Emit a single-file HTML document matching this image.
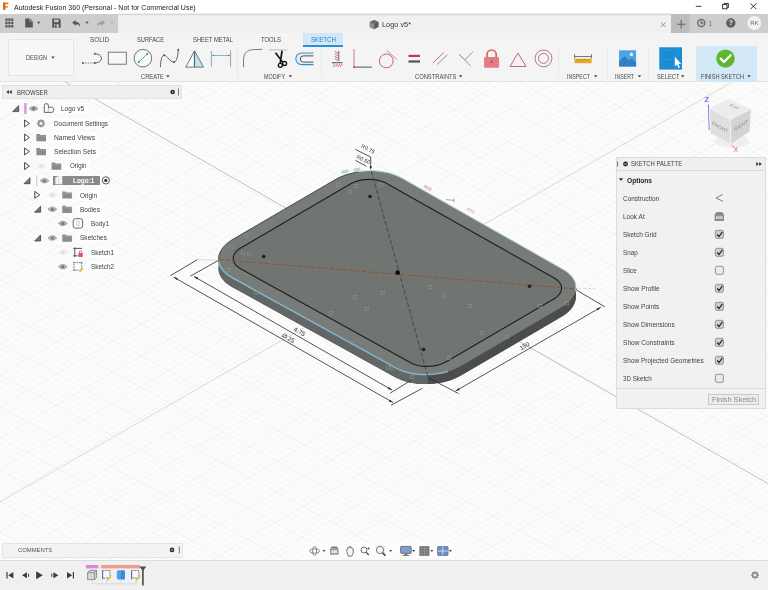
<!DOCTYPE html>
<html>
<head>
<meta charset="utf-8">
<style>
*{box-sizing:border-box;margin:0;padding:0}
html,body{width:768px;height:590px;overflow:hidden;background:#fbfbfb;font-family:"Liberation Sans",sans-serif;}
#root{position:relative;width:768px;height:590px;overflow:hidden;background:#fbfbfb;filter:blur(0.45px)}
.abs{position:absolute}
.t{position:absolute;white-space:nowrap;color:#555;font-size:6.5px;line-height:8px;letter-spacing:0}
#title{left:0;top:0;width:768px;height:14px;background:#fff}
#qbar{left:0;top:14px;width:768px;height:19px;background:#f0f0f0}
#qleft{left:0;top:14px;width:118px;height:19px;background:#cdcdcd}
#qright{left:671px;top:14px;width:97px;height:19px;background:#cdcdcd}
#ribbon{left:0;top:33px;width:768px;height:49px;background:#f4f4f4;border-bottom:1px solid #e2e2e2}
#bottom{left:0;top:560px;width:768px;height:30px;background:#f0f0f0;border-top:1px solid #dcdcdc}
</style>
</head>
<body>
<div id="root">
<!--CANVAS-->
<svg class="abs" id="canvas" style="left:0;top:0" width="768" height="590" viewBox="0 0 768 590">
<rect x="0" y="0" width="768" height="590" fill="#fcfcfc"/>
<path d="M2 80 L0 81M24 80 L0 94M35 80 L0 101M46 80 L0 107M58 80 L0 114M80 80 L0 127M91 80 L0 133M102 80 L0 140M113 80 L0 146M135 80 L0 159M146 80 L0 165M157 80 L0 172M168 80 L0 178M190 80 L0 191M201 80 L0 198M212 80 L0 204M223 80 L0 210M245 80 L0 223M256 80 L0 230M267 80 L-0 236M278 80 L0 242M300 80 L0 255M311 80 L0 262M322 80 L0 268M332 80 L0 274M354 80 L0 287M365 80 L0 293M376 80 L0 300M387 80 L-0 306M409 80 L0 319M419 80 L-0 325M430 80 L0 331M441 80 L0 338M463 80 L0 350M473 80 L0 356M484 80 L0 363M495 80 L0 369M516 80 L0 382M527 80 L0 388M538 80 L0 394M549 80 L0 400M570 80 L0 413M581 80 L0 419M592 80 L0 425M602 80 L0 432M624 80 L0 444M634 80 L0 450M645 80 L-0 457M656 80 L0 463M677 80 L-0 475M688 80 L-0 481M698 80 L0 488M709 80 L0 494M730 80 L0 506M741 80 L0 512M751 80 L0 519M762 80 L0 525M768 89 L0 537M768 95 L0 543M768 101 L0 549M768 107 L0 555M768 119 L10 562M768 126 L20 562M768 132 L31 562M768 138 L41 562M768 150 L62 562M768 156 L73 562M768 162 L83 562M768 168 L94 562M768 181 L115 562M768 187 L125 562M768 193 L135 562M768 199 L146 562M768 211 L167 562M768 217 L177 562M768 223 L187 562M768 229 L198 562M768 241 L218 562M768 247 L229 562M768 253 L239 562M768 259 L249 562M768 272 L270 562M768 278 L280 562M768 284 L291 562M768 290 L301 562M768 302 L322 562M768 308 L332 562M768 314 L342 562M768 320 L352 562M768 332 L373 562M768 338 L383 562M768 343 L393 562M768 349 L404 562M768 361 L424 562M768 367 L434 562M768 373 L444 562M768 379 L455 562M768 391 L475 562M768 397 L485 562M768 403 L495 562M768 409 L505 562M768 421 L526 562M768 427 L536 562M768 433 L546 562M768 438 L556 562M768 450 L576 562M768 456 L586 562M768 462 L596 562M768 468 L607 562M768 480 L627 562M768 485 L637 562M768 491 L647 562M768 497 L657 562M768 509 L677 562M768 515 L687 562M768 521 L697 562M768 526 L707 562M768 538 L727 562M768 544 L737 562M768 550 L747 562M768 555 L757 562M765 80 L768 82M754 80 L768 88M732 80 L768 101M720 80 L768 108M709 80 L768 114M698 80 L768 121M675 80 L768 134M664 80 L768 141M653 80 L768 147M641 80 L768 154M619 80 L768 167M607 80 L768 173M596 80 L768 180M585 80 L768 186M562 80 L768 199M551 80 L768 206M539 80 L768 212M528 80 L768 219M505 80 L768 232M494 80 L768 238M482 80 L768 245M471 80 L768 251M448 80 L768 264M436 80 L768 271M425 80 L768 277M413 80 L768 283M390 80 L768 296M379 80 L768 303M367 80 L768 309M356 80 L768 316M333 80 L768 328M321 80 L768 335M309 80 L768 341M298 80 L768 347M275 80 L768 360M263 80 L768 367M251 80 L768 373M240 80 L768 379M217 80 L768 392M205 80 L768 398M193 80 L768 405M182 80 L768 411M158 80 L768 424M146 80 L768 430M135 80 L768 436M123 80 L768 443M100 80 L768 455M88 80 L768 461M76 80 L768 468M64 80 L768 474M41 80 L768 487M29 80 L768 493M17 80 L768 499M5 80 L768 505M0 90 L768 518M0 97 L768 524M0 103 L768 530M0 110 L768 537M0 123 L768 549M0 130 L768 555M0 136 L768 561M0 143 L758 562M0 156 L735 562M0 162 L724 562M0 169 L713 562M0 175 L702 562M0 188 L679 562M0 195 L668 562M0 201 L657 562M0 208 L645 562M0 221 L623 562M0 227 L611 562M0 234 L600 562M0 240 L589 562M0 253 L566 562M0 260 L555 562M0 266 L543 562M0 272 L532 562M0 285 L509 562M0 292 L498 562M0 298 L486 562M0 305 L475 562M0 317 L452 562M0 324 L440 562M0 330 L429 562M0 337 L417 562M0 349 L394 562M0 356 L383 562M0 362 L371 562M0 368 L360 562M0 381 L337 562M-0 388 L325 562M0 394 L314 562M0 400 L302 562M0 413 L279 562M0 419 L267 562M0 426 L256 562M0 432 L244 562M0 444 L221 562M0 451 L209 562M-0 457 L197 562M0 463 L186 562M0 476 L162 562M-0 482 L151 562M0 488 L139 562M0 495 L127 562M0 507 L104 562M0 513 L92 562M0 520 L80 562M-0 526 L68 562M-0 538 L45 562M0 545 L33 562M0 551 L21 562M0 557 L9 562" stroke="#f5f5f5" stroke-width="0.5" fill="none"/>
<path d="M13 80 L0 88M69 80 L0 120M124 80 L-0 152M179 80 L0 185M234 80 L0 217M289 80 L0 249M343 80 L0 281M398 80 L0 312M452 80 L0 344M506 80 L0 375M559 80 L0 407M613 80 L-0 438M666 80 L0 469M719 80 L0 500M768 83 L0 531M768 113 L0 562M768 144 L52 562M768 175 L104 562M768 205 L156 562M768 235 L208 562M768 266 L260 562M768 296 L311 562M768 326 L363 562M768 355 L414 562M768 385 L465 562M768 415 L516 562M768 444 L566 562M768 474 L617 562M768 503 L667 562M768 532 L717 562M768 561 L767 562M743 80 L768 95M687 80 L768 128M630 80 L768 160M573 80 L768 193M516 80 L768 225M459 80 L768 258M402 80 L768 290M344 80 L768 322M286 80 L768 354M228 80 L768 386M170 80 L768 417M111 80 L768 449M52 80 L768 480M0 84 L768 512M0 117 L768 543M0 149 L747 562M0 182 L690 562M0 214 L634 562M0 247 L577 562M0 279 L520 562M0 311 L463 562M0 343 L406 562M0 375 L348 562M-0 407 L290 562M0 438 L232 562M0 470 L174 562M-0 501 L115 562M-0 532 L57 562" stroke="#eeeeee" stroke-width="0.7" fill="none"/>
<path d="M56 76.7 L768 483.6" stroke="#cfb2ad" stroke-width="0.9" fill="none"/>
<path d="M0 502 L768 61.5" stroke="#c2e3bd" stroke-width="0.9" fill="none"/>
<path d="M563.2 279.2 L566.5 281.3 L569.4 283.7 L571.8 286.2 L573.7 288.9 L575.0 291.8 L575.7 294.7 L575.9 297.7 L575.4 300.6 L574.4 303.6 L572.9 306.5 L570.8 309.3 L568.1 312.0 L565.0 314.5 L561.5 316.8 L460.9 375.4 L457.0 377.5 L452.6 379.4 L448.0 380.9 L443.2 382.2 L438.2 383.1 L433.0 383.8 L427.8 384.1 L422.6 384.0 L417.5 383.7 L412.5 383.0 L407.7 382.0 L403.2 380.7 L399.0 379.1 L395.2 377.2 L232.0 287.0 L228.5 284.8 L225.5 282.4 L223.0 279.8 L221.0 277.1 L219.6 274.2 L218.8 271.3 L218.6 268.2 L218.9 265.2 L219.9 262.2 L221.4 259.3 L223.5 256.4 L226.2 253.7 L229.3 251.2 L232.9 248.8 L335.1 189.2 L339.1 187.1 L343.5 185.2 L348.1 183.7 L353.1 182.4 L358.2 181.4 L363.4 180.8 L368.7 180.6 L374.0 180.6 L379.2 181.0 L384.3 181.8 L389.1 182.8 L393.7 184.2 L397.9 185.9 L401.8 187.8 Z" fill="#4c4f4d"/>
<path d="M427.8 374.6 L422.6 374.5 L417.5 374.2 L412.5 373.5 L407.7 372.5 L403.2 371.2 L399.0 369.6 L395.2 367.7 L232.0 277.5 L228.5 275.3 L225.5 272.9 L223.0 270.3 L221.0 267.6 L219.6 264.7 L218.8 261.8 L218.6 258.7 L218.6 268.2 L218.8 271.3 L219.6 274.2 L221.0 277.1 L223.0 279.8 L225.5 282.4 L228.5 284.8 L232.0 287.0 L395.2 377.2 L399.0 379.1 L403.2 380.7 L407.7 382.0 L412.5 383.0 L417.5 383.7 L422.6 384.0 L427.8 384.1 Z" fill="#626664"/>
<path d="M575.9 288.2 L575.4 291.1 L574.4 294.1 L572.9 297.0 L570.8 299.8 L568.1 302.5 L565.0 305.0 L561.5 307.3 L460.9 365.9 L457.0 368.0 L452.6 369.9 L448.0 371.4 L443.2 372.7 L438.2 373.6 L433.0 374.3 L427.8 374.6 L427.8 384.1 L433.0 383.8 L438.2 383.1 L443.2 382.2 L448.0 380.9 L452.6 379.4 L457.0 377.5 L460.9 375.4 L561.5 316.8 L565.0 314.5 L568.1 312.0 L570.8 309.3 L572.9 306.5 L574.4 303.6 L575.4 300.6 L575.9 297.7 Z" fill="#4a4d4b"/>
<path d="M563.2 269.7 L566.5 271.8 L569.4 274.2 L571.8 276.7 L573.7 279.4 L575.0 282.3 L575.7 285.2 L575.9 288.2 L575.4 291.1 L574.4 294.1 L572.9 297.0 L570.8 299.8 L568.1 302.5 L565.0 305.0 L561.5 307.3 L460.9 365.9 L457.0 368.0 L452.6 369.9 L448.0 371.4 L443.2 372.7 L438.2 373.6 L433.0 374.3 L427.8 374.6 L422.6 374.5 L417.5 374.2 L412.5 373.5 L407.7 372.5 L403.2 371.2 L399.0 369.6 L395.2 367.7 L232.0 277.5 L228.5 275.3 L225.5 272.9 L223.0 270.3 L221.0 267.6 L219.6 264.7 L218.8 261.8 L218.6 258.7 L218.9 255.7 L219.9 252.7 L221.4 249.8 L223.5 246.9 L226.2 244.2 L229.3 241.7 L232.9 239.3 L335.1 179.7 L339.1 177.6 L343.5 175.7 L348.1 174.2 L353.1 172.9 L358.2 171.9 L363.4 171.3 L368.7 171.1 L374.0 171.1 L379.2 171.5 L384.3 172.3 L389.1 173.3 L393.7 174.7 L397.9 176.4 L401.8 178.3 Z" fill="#787c79"/>
<path d="M448.0 371.4 L443.2 372.7 L438.2 373.6 L433.0 374.3 L427.8 374.6 L422.6 374.5 L417.5 374.2 L412.5 373.5 L407.7 372.5 L403.2 371.2 L399.0 369.6 L395.2 367.7 L232.0 277.5 L228.5 275.3 L225.5 272.9 L223.0 270.3 L221.0 267.6 L219.6 264.7 L218.8 261.8 L218.6 258.7 " fill="none" stroke="#86b3ca" stroke-width="1.5"/>
<path d="M358.2 171.5 L363.4 170.9 L368.7 170.7 L374.0 170.7 L379.2 171.1 L384.3 171.9 L389.1 172.9 L393.7 174.3 L397.9 176.0 L401.8 177.9 L563.2 269.3 L566.5 271.4 L569.4 273.8 L571.8 276.3 L573.7 279.0 L575.0 281.9 L575.7 284.8 L575.9 287.8 L575.4 290.7 " fill="none" stroke="#a8cfd0" stroke-width="1" opacity="0.85"/>
<path d="M554.6 278.3 L556.4 279.5 L558.0 280.8 L559.4 282.2 L560.4 283.7 L561.1 285.3 L561.5 286.9 L561.6 288.5 L561.4 290.1 L560.8 291.8 L559.9 293.4 L558.8 294.9 L557.3 296.4 L555.6 297.8 L553.7 299.0 L446.3 361.7 L444.2 362.8 L441.8 363.8 L439.2 364.7 L436.6 365.4 L433.8 365.9 L431.0 366.2 L428.1 366.4 L425.2 366.4 L422.4 366.2 L419.7 365.8 L417.1 365.3 L414.6 364.5 L412.3 363.7 L410.2 362.6 L240.6 268.7 L238.7 267.5 L237.0 266.2 L235.6 264.8 L234.5 263.3 L233.8 261.7 L233.3 260.1 L233.2 258.4 L233.4 256.7 L233.9 255.1 L234.8 253.5 L235.9 251.9 L237.4 250.4 L239.1 249.0 L241.1 247.7 L349.9 184.2 L352.2 183.0 L354.6 182.0 L357.1 181.1 L359.8 180.4 L362.7 179.9 L365.5 179.6 L368.5 179.4 L371.4 179.5 L374.2 179.7 L377.0 180.1 L379.7 180.7 L382.2 181.4 L384.5 182.3 L386.7 183.4 Z" fill="#717572" stroke="#1c1c1c" stroke-width="1.1"/>
<path d="M218.8 261.8 L218.6 258.7 L218.9 255.7 L219.9 252.7 L221.4 249.8 L223.5 246.9 L226.2 244.2 L229.3 241.7 L232.9 239.3 L335.1 179.7 L339.1 177.6 L343.5 175.7 L348.1 174.2 L353.1 172.9 L358.2 171.9 " fill="none" stroke="#2e302f" stroke-width="0.8"/>
<path d="M219.5 259.6 L577.0 289.0" stroke="#8f4f2c" stroke-width="0.9" stroke-dasharray="4.5 2" fill="none"/>
<path d="M371.3 171.0 L427.6 376.0" stroke="#3a3a38" stroke-width="0.8" stroke-dasharray="4.5 2" fill="none"/>
<circle cx="370.0" cy="196.5" r="1.8" fill="#1e1e1e"/>
<circle cx="529.6" cy="286.2" r="1.8" fill="#1e1e1e"/>
<circle cx="423.6" cy="349.5" r="1.8" fill="#1e1e1e"/>
<circle cx="263.7" cy="256.6" r="1.8" fill="#1e1e1e"/>
<circle cx="397.6" cy="272.6" r="2.3" fill="#0c0c0c"/>
<path d="M219.0 260.0 L190.4 276.2" stroke="#2a2a2a" stroke-width="0.8" fill="none" />
<path d="M197.4 259.6 L170.5 275.6" stroke="#2a2a2a" stroke-width="0.8" fill="none" />
<path d="M194.0 276.5 L392.0 390.0" stroke="#2a2a2a" stroke-width="0.8" fill="none" />
<path d="M173.7 277.1 L393.0 402.5" stroke="#2a2a2a" stroke-width="0.8" fill="none" />
<path d="M194.0 276.5 L197.1 279.5 L198.2 277.6 z" fill="#2a2a2a"/>
<path d="M392.0 390.0 L388.9 387.0 L387.8 388.9 z" fill="#2a2a2a"/>
<path d="M173.7 277.1 L176.8 280.1 L177.9 278.2 z" fill="#2a2a2a"/>
<path d="M393.0 402.5 L389.9 399.5 L388.8 401.4 z" fill="#2a2a2a"/>
<path d="M411.0 380.4 L390.0 393.2" stroke="#2a2a2a" stroke-width="0.8" fill="none" />
<path d="M422.5 388.2 L391.0 405.2" stroke="#2a2a2a" stroke-width="0.8" fill="none" />
<text transform="translate(298.5 333.4) rotate(29.8)" font-family="Liberation Sans, sans-serif" font-size="6.2" fill="#333" text-anchor="middle">4.75</text>
<text transform="translate(287.2 339.8) rotate(29.8)" font-family="Liberation Sans, sans-serif" font-size="6.2" fill="#333" text-anchor="middle">Ø.25</text>
<path d="M197.0 259.6 L219.0 260.2" stroke="#e6c6bc" stroke-width="0.7" fill="none" />
<path d="M578.0 288.2 L595.0 288.6" stroke="#d9c2a8" stroke-width="0.7" fill="none" stroke-dasharray="3 2"/>
<path d="M428.0 377.5 L458.6 393.6" stroke="#2a2a2a" stroke-width="0.8" fill="none" />
<path d="M576.0 289.8 L604.8 306.8" stroke="#2a2a2a" stroke-width="0.8" fill="none" />
<path d="M455.6 391.0 L600.8 307.3" stroke="#2a2a2a" stroke-width="0.8" fill="none" />
<path d="M455.6 391.0 L459.8 389.9 L458.7 387.9 z" fill="#2a2a2a"/>
<path d="M600.8 307.3 L596.6 308.4 L597.7 310.4 z" fill="#2a2a2a"/>
<text transform="translate(525.6 347.8) rotate(-30.0)" font-family="Liberation Sans, sans-serif" font-size="6.2" fill="#333" text-anchor="middle">150</text>
<path d="M355.4 149.4 L370.7 157.0" stroke="#2a2a2a" stroke-width="0.8" fill="none" />
<path d="M370.7 157.0 L370.7 169.5" stroke="#2a2a2a" stroke-width="0.8" fill="none" />
<path d="M355.4 160.4 L366.4 166.2" stroke="#2a2a2a" stroke-width="0.8" fill="none" />
<text transform="translate(367.2 150.6) rotate(27.0)" font-family="Liberation Sans, sans-serif" font-size="5.4" fill="#333" text-anchor="middle">R0.75</text>
<text transform="translate(362.4 161.2) rotate(27.0)" font-family="Liberation Sans, sans-serif" font-size="5.4" fill="#333" text-anchor="middle">R0.50</text>
<circle cx="370.7" cy="167" r="1.1" fill="#222"/>
<rect x="341.5" y="170.1" width="7" height="3" fill="#a9cccd" opacity="0.8" transform="rotate(-14 345.0 171.6)"/>
<rect x="353.5" y="168.1" width="7" height="3" fill="#a9cccd" opacity="0.8" transform="rotate(-14 357.0 169.6)"/>
<text transform="translate(427.0 189.5) rotate(30.0)" font-family="Liberation Sans, sans-serif" font-size="4.6" fill="#c9777a" text-anchor="middle">R55</text>
<text transform="translate(470.0 212.0) rotate(30.0)" font-family="Liberation Sans, sans-serif" font-size="4.6" fill="#c9989a" text-anchor="middle">R55</text>
<path d="M446.0 199.6 L454.0 200.4" stroke="#b88" stroke-width="0.8" fill="none" />
<path d="M454.0 198.6 L454.0 202.4" stroke="#b88" stroke-width="0.8" fill="none" />
<rect x="244.2" y="234.5" width="3.6" height="3" fill="none" stroke="#8d918e" stroke-width="0.6"/>
<rect x="247.2" y="252.0" width="3.6" height="3" fill="none" stroke="#8d918e" stroke-width="0.6"/>
<rect x="229.7" y="245.5" width="3.6" height="3" fill="none" stroke="#8d918e" stroke-width="0.6"/>
<rect x="241.2" y="251.5" width="3.6" height="3" fill="none" stroke="#8d918e" stroke-width="0.6"/>
<rect x="336.2" y="183.5" width="3.6" height="3" fill="none" stroke="#8d918e" stroke-width="0.6"/>
<rect x="348.2" y="190.5" width="3.6" height="3" fill="none" stroke="#8d918e" stroke-width="0.6"/>
<rect x="354.2" y="184.5" width="3.6" height="3" fill="none" stroke="#8d918e" stroke-width="0.6"/>
<rect x="379.2" y="183.5" width="3.6" height="3" fill="none" stroke="#8d918e" stroke-width="0.6"/>
<rect x="365.2" y="307.5" width="3.6" height="3" fill="none" stroke="#8d918e" stroke-width="0.6"/>
<rect x="353.2" y="295.5" width="3.6" height="3" fill="none" stroke="#8d918e" stroke-width="0.6"/>
<rect x="381.2" y="291.5" width="3.6" height="3" fill="none" stroke="#8d918e" stroke-width="0.6"/>
<rect x="442.2" y="294.0" width="3.6" height="3" fill="none" stroke="#8d918e" stroke-width="0.6"/>
<rect x="428.2" y="285.5" width="3.6" height="3" fill="none" stroke="#8d918e" stroke-width="0.6"/>
<rect x="468.2" y="304.5" width="3.6" height="3" fill="none" stroke="#8d918e" stroke-width="0.6"/>
<rect x="505.2" y="335.5" width="3.6" height="3" fill="none" stroke="#8d918e" stroke-width="0.6"/>
<rect x="480.2" y="331.5" width="3.6" height="3" fill="none" stroke="#8d918e" stroke-width="0.6"/>
<rect x="447.2" y="356.5" width="3.6" height="3" fill="none" stroke="#8d918e" stroke-width="0.6"/>
<rect x="538.2" y="304.5" width="3.6" height="3" fill="none" stroke="#8d918e" stroke-width="0.6"/>
<rect x="565.2" y="302.0" width="3.6" height="3" fill="none" stroke="#8d918e" stroke-width="0.6"/>
<rect x="386.2" y="366.0" width="3.6" height="3" fill="none" stroke="#8d918e" stroke-width="0.6"/>
<rect x="390.2" y="367.0" width="3.6" height="3" fill="none" stroke="#8d918e" stroke-width="0.6"/>
<rect x="410.2" y="375.5" width="3.6" height="3" fill="none" stroke="#8d918e" stroke-width="0.6"/>
<rect x="227.2" y="268.5" width="3.6" height="3" fill="none" stroke="#8d918e" stroke-width="0.6"/>
<rect x="254.2" y="291.5" width="3.6" height="3" fill="none" stroke="#8d918e" stroke-width="0.6"/>
<rect x="329.2" y="311.5" width="3.6" height="3" fill="none" stroke="#8d918e" stroke-width="0.6"/>
</svg>
<div class="abs" id="title"></div><div class="abs" id="qbar"></div><div class="abs" id="qleft"></div><div class="abs" id="qright"></div><div class="abs" id="ribbon"></div><div class="abs" id="bottom"></div>
<div class="abs" style="left:696px;top:46px;width:61px;height:36px;background:#d3e8f6"></div>
<div class="t" style="left:14.0px;top:2.8px;font-size:7.20px;line-height:9.2px;color:#222;transform-origin:0 50%;transform:scaleX(0.978);">Autodesk Fusion 360 (Personal - Not for Commercial Use)</div>
<div class="t" style="left:381.5px;top:20.4px;font-size:7.00px;line-height:9.0px;color:#333;transform-origin:0 50%;transform:scaleX(1.049);">Logo v5*</div>
<div class="abs" style="left:303px;top:33px;width:40px;height:14px;background:#d3e8f6;border-bottom:2px solid #2b8fd8"></div>
<div class="t" style="left:89.5px;top:36.1px;font-size:6.60px;line-height:8.6px;color:#444;transform-origin:0 50%;transform:scaleX(0.959);">SOLID</div>
<div class="t" style="left:137.0px;top:36.1px;font-size:6.60px;line-height:8.6px;color:#444;transform-origin:0 50%;transform:scaleX(0.866);">SURFACE</div>
<div class="t" style="left:193.0px;top:36.1px;font-size:6.60px;line-height:8.6px;color:#444;transform-origin:0 50%;transform:scaleX(0.884);">SHEET METAL</div>
<div class="t" style="left:261.0px;top:36.1px;font-size:6.60px;line-height:8.6px;color:#444;transform-origin:0 50%;transform:scaleX(0.899);">TOOLS</div>
<div class="t" style="left:310.5px;top:36.1px;font-size:6.60px;line-height:8.6px;color:#1f7fc9;transform-origin:0 50%;transform:scaleX(0.934);">SKETCH</div>
<div class="abs" style="left:8px;top:39px;width:66px;height:37px;background:#f8f8f8;border:1px solid #e6e6e6;border-radius:2px"></div>
<div class="t" style="left:26.0px;top:54.1px;font-size:6.60px;line-height:8.6px;color:#444;transform-origin:0 50%;transform:scaleX(0.830);">DESIGN</div>
<div class="t" style="left:141.0px;top:72.8px;font-size:6.40px;line-height:8.4px;color:#4a4a4a;transform-origin:0 50%;transform:scaleX(0.902);">CREATE</div>
<div class="t" style="left:264.0px;top:72.8px;font-size:6.40px;line-height:8.4px;color:#4a4a4a;transform-origin:0 50%;transform:scaleX(0.844);">MODIFY</div>
<div class="t" style="left:414.5px;top:72.8px;font-size:6.40px;line-height:8.4px;color:#4a4a4a;transform-origin:0 50%;transform:scaleX(0.905);">CONSTRAINTS</div>
<div class="t" style="left:567.0px;top:72.8px;font-size:6.40px;line-height:8.4px;color:#4a4a4a;transform-origin:0 50%;transform:scaleX(0.829);">INSPECT</div>
<div class="t" style="left:615.0px;top:72.8px;font-size:6.40px;line-height:8.4px;color:#4a4a4a;transform-origin:0 50%;transform:scaleX(0.814);">INSERT</div>
<div class="t" style="left:656.5px;top:72.8px;font-size:6.40px;line-height:8.4px;color:#4a4a4a;transform-origin:0 50%;transform:scaleX(0.904);">SELECT</div>
<div class="t" style="left:701.0px;top:72.8px;font-size:6.40px;line-height:8.4px;color:#4a4a4a;transform-origin:0 50%;transform:scaleX(0.883);">FINISH SKETCH</div>
<div class="abs" style="left:237px;top:48px;width:1px;height:31px;background:#e9e9e9"></div>
<div class="abs" style="left:321px;top:48px;width:1px;height:31px;background:#e9e9e9"></div>
<div class="abs" style="left:558px;top:48px;width:1px;height:31px;background:#e9e9e9"></div>
<div class="abs" style="left:607px;top:48px;width:1px;height:31px;background:#e9e9e9"></div>
<div class="abs" style="left:648px;top:48px;width:1px;height:31px;background:#e9e9e9"></div>
<div class="t" style="left:709.0px;top:20.1px;font-size:6.50px;line-height:8.5px;color:#444;transform-origin:0 50%;transform:scaleX(0.692);">1</div>
<div class="abs" style="left:2px;top:543px;width:181px;height:15px;background:#f3f3f3;border:1px solid #e4e4e4"></div>
<div class="t" style="left:17.5px;top:545.8px;font-size:6.20px;line-height:8.2px;color:#555;transform-origin:0 50%;transform:scaleX(0.946);">COMMENTS</div>
<div class="abs" style="left:2px;top:85px;width:180px;height:14px;background:#efefef;border:1px solid #e2e2e2"></div>
<div class="t" style="left:17.0px;top:88.7px;font-size:6.40px;line-height:8.4px;color:#444;transform-origin:0 50%;transform:scaleX(0.937);">BROWSER</div>
<div class="abs" style="left:57.0px;top:103.0px;width:31.0px;height:11px;background:rgba(255,255,255,0.6)"></div>
<div class="t" style="left:61.0px;top:105.0px;font-size:6.80px;line-height:8.8px;color:#414141;transform-origin:0 50%;transform:scaleX(0.951);">Logo v5</div>
<div class="abs" style="left:50.0px;top:117.9px;width:62.0px;height:11px;background:rgba(255,255,255,0.6)"></div>
<div class="t" style="left:54.0px;top:119.9px;font-size:6.80px;line-height:8.8px;color:#414141;transform-origin:0 50%;transform:scaleX(0.940);">Document Settings</div>
<div class="abs" style="left:50.0px;top:131.8px;width:49.0px;height:11px;background:rgba(255,255,255,0.6)"></div>
<div class="t" style="left:54.0px;top:133.8px;font-size:6.80px;line-height:8.8px;color:#414141;transform-origin:0 50%;transform:scaleX(0.980);">Named Views</div>
<div class="abs" style="left:50.0px;top:146.0px;width:50.0px;height:11px;background:rgba(255,255,255,0.6)"></div>
<div class="t" style="left:54.0px;top:148.0px;font-size:6.80px;line-height:8.8px;color:#414141;transform-origin:0 50%;transform:scaleX(0.966);">Selection Sets</div>
<div class="abs" style="left:65.5px;top:160.3px;width:24.5px;height:11px;background:rgba(255,255,255,0.6)"></div>
<div class="t" style="left:69.5px;top:162.3px;font-size:6.80px;line-height:8.8px;color:#414141;transform-origin:0 50%;transform:scaleX(0.910);">Origin</div>
<div class="abs" style="left:76.0px;top:189.5px;width:25.0px;height:11px;background:rgba(255,255,255,0.6)"></div>
<div class="t" style="left:80.0px;top:191.5px;font-size:6.80px;line-height:8.8px;color:#414141;transform-origin:0 50%;transform:scaleX(0.937);">Origin</div>
<div class="abs" style="left:76.0px;top:203.7px;width:28.0px;height:11px;background:rgba(255,255,255,0.6)"></div>
<div class="t" style="left:80.0px;top:205.7px;font-size:6.80px;line-height:8.8px;color:#414141;transform-origin:0 50%;transform:scaleX(0.962);">Bodies</div>
<div class="abs" style="left:87.0px;top:217.9px;width:26.0px;height:11px;background:rgba(255,255,255,0.6)"></div>
<div class="t" style="left:91.0px;top:219.9px;font-size:6.80px;line-height:8.8px;color:#414141;transform-origin:0 50%;transform:scaleX(0.934);">Body1</div>
<div class="abs" style="left:76.0px;top:232.2px;width:35.0px;height:11px;background:rgba(255,255,255,0.6)"></div>
<div class="t" style="left:80.0px;top:234.2px;font-size:6.80px;line-height:8.8px;color:#414141;transform-origin:0 50%;transform:scaleX(0.965);">Sketches</div>
<div class="abs" style="left:87.0px;top:246.7px;width:31.0px;height:11px;background:rgba(255,255,255,0.6)"></div>
<div class="t" style="left:91.0px;top:248.7px;font-size:6.80px;line-height:8.8px;color:#414141;transform-origin:0 50%;transform:scaleX(0.936);">Sketch1</div>
<div class="abs" style="left:87.0px;top:261.0px;width:31.0px;height:11px;background:rgba(255,255,255,0.6)"></div>
<div class="t" style="left:91.0px;top:263.0px;font-size:6.80px;line-height:8.8px;color:#414141;transform-origin:0 50%;transform:scaleX(0.936);">Sketch2</div>
<div class="abs" style="left:53px;top:175.6px;width:47px;height:9.2px;background:#8a8a8a"></div>
<div class="t" style="left:73.0px;top:176.7px;font-size:6.80px;line-height:8.8px;color:#fff;font-weight:bold;transform-origin:0 50%;transform:scaleX(0.944);">Logo:1</div>
<div class="abs" style="left:616px;top:156.5px;width:150px;height:252.5px;background:#f1f1f1;border:1px solid #dcdcdc"></div>
<div class="abs" style="left:617px;top:157.5px;width:148px;height:13px;background:#efefef;border-bottom:1px solid #dadada"></div>
<div class="t" style="left:630.5px;top:160.3px;font-size:6.30px;line-height:8.3px;color:#444;transform-origin:0 50%;transform:scaleX(0.934);">SKETCH PALETTE</div>
<div class="t" style="left:626.8px;top:176.0px;font-size:7.00px;line-height:9.0px;color:#222;font-weight:bold;transform-origin:0 50%;transform:scaleX(0.946);">Options</div>
<div class="t" style="left:623.3px;top:194.8px;font-size:6.80px;line-height:8.8px;color:#444;transform-origin:0 50%;transform:scaleX(0.948);">Construction</div>
<div class="t" style="left:623.3px;top:212.8px;font-size:6.80px;line-height:8.8px;color:#444;transform-origin:0 50%;transform:scaleX(0.957);">Look At</div>
<div class="t" style="left:623.3px;top:230.8px;font-size:6.80px;line-height:8.8px;color:#444;transform-origin:0 50%;transform:scaleX(0.949);">Sketch Grid</div>
<div class="t" style="left:623.3px;top:248.8px;font-size:6.80px;line-height:8.8px;color:#444;transform-origin:0 50%;transform:scaleX(0.926);">Snap</div>
<div class="t" style="left:623.3px;top:266.8px;font-size:6.80px;line-height:8.8px;color:#444;transform-origin:0 50%;transform:scaleX(0.930);">Slice</div>
<div class="t" style="left:623.3px;top:284.8px;font-size:6.80px;line-height:8.8px;color:#444;transform-origin:0 50%;transform:scaleX(0.961);">Show Profile</div>
<div class="t" style="left:623.3px;top:302.8px;font-size:6.80px;line-height:8.8px;color:#444;transform-origin:0 50%;transform:scaleX(0.958);">Show Points</div>
<div class="t" style="left:623.3px;top:320.8px;font-size:6.80px;line-height:8.8px;color:#444;transform-origin:0 50%;transform:scaleX(0.950);">Show Dimensions</div>
<div class="t" style="left:623.3px;top:338.8px;font-size:6.80px;line-height:8.8px;color:#444;transform-origin:0 50%;transform:scaleX(0.970);">Show Constraints</div>
<div class="t" style="left:623.3px;top:356.8px;font-size:6.80px;line-height:8.8px;color:#444;transform-origin:0 50%;transform:scaleX(0.953);">Show Projected Geometries</div>
<div class="t" style="left:623.3px;top:374.8px;font-size:6.80px;line-height:8.8px;color:#444;transform-origin:0 50%;transform:scaleX(0.915);">3D Sketch</div>
<div class="abs" style="left:616px;top:388px;width:149px;height:1px;background:#dcdcdc"></div>
<div class="abs" style="left:708px;top:394px;width:51px;height:11px;background:#ececec;border:1px solid #c9c9c9"></div>
<div class="t" style="left:711.5px;top:396.1px;font-size:6.80px;line-height:8.8px;color:#8a8a8a;transform-origin:0 50%;transform:scaleX(1.078);">Finish Sketch</div>
<svg class="abs" style="left:0;top:0" width="768" height="590" viewBox="0 0 768 590">
<path d="M6.3 92 l2.6 -2 v4z M9.2 92 l2.6 -2 v4z" fill="#333"/>
<circle cx="172.6" cy="92" r="2.3" fill="#2a2a2a"/><circle cx="172.6" cy="92" r="0.7" fill="#ddd"/>
<path d="M178.5 88.5 v7" stroke="#555" stroke-width="0.8"/>
<path d="M18.7 111.6 v-6 l-6 6z" fill="#777" stroke="#333" stroke-width="0.7" stroke-linejoin="round"/>
<rect x="24.2" y="103" width="2.4" height="11" fill="#d59ad6"/>
<path d="M29.2 108.6 q4.4 -4.6 8.8 0 q-4.4 4.6 -8.8 0z" fill="#b9b9b9" stroke="#8e8e8e" stroke-width="0.7"/>
<circle cx="33.6" cy="108.6" r="1.5" fill="#767676"/>
<path d="M44.3 112.4 V105.6 Q44.3 103.6 46.3 103.6 Q48.4 103.6 48.4 105.6 V107.8 Q50 106.6 52 107.2 Q54 108 53.8 110.4 Q53.6 112.4 51.4 112.4 Z" fill="#fbfbfb" stroke="#555" stroke-width="0.9" stroke-linejoin="round"/><path d="M48.4 107.8 V112" stroke="#999" stroke-width="0.6"/>
<path d="M24.6 119.9 l4.8 3.5 l-4.8 3.5z" fill="#fafafa" stroke="#333" stroke-width="0.9" stroke-linejoin="round"/>
<polygon points="45.40 123.40 44.05 124.66 44.11 126.51 42.26 126.45 41.00 127.80 39.74 126.45 37.89 126.51 37.95 124.66 36.60 123.40 37.95 122.14 37.89 120.29 39.74 120.35 41.00 119.00 42.26 120.35 44.11 120.29 44.05 122.14" fill="#939393"/>
<circle cx="41" cy="123.4" r="1.6" fill="#f0f0f0"/>
<path d="M24.6 134.0 l4.8 3.5 l-4.8 3.5z" fill="#fafafa" stroke="#333" stroke-width="0.9" stroke-linejoin="round"/>
<path d="M36.4 134.0 h3.2 l0.8 1 h5.6 v6.2 h-9.6z" fill="#8b8b8b"/>
<path d="M36.4 136.2 h9.6" stroke="#a5a5a5" stroke-width="0.7"/>
<path d="M24.6 148.0 l4.8 3.5 l-4.8 3.5z" fill="#fafafa" stroke="#333" stroke-width="0.9" stroke-linejoin="round"/>
<path d="M36.4 148.1 h3.2 l0.8 1 h5.6 v6.2 h-9.6z" fill="#8b8b8b"/>
<path d="M36.4 150.3 h9.6" stroke="#a5a5a5" stroke-width="0.7"/>
<path d="M24.6 162.5 l4.8 3.5 l-4.8 3.5z" fill="#fafafa" stroke="#333" stroke-width="0.9" stroke-linejoin="round"/>
<path d="M37.0 166.0 q4.4 -4.6 8.8 0 q-4.4 4.6 -8.8 0z" fill="#efefef" stroke="#e6e6e6" stroke-width="0.7"/>
<circle cx="41.4" cy="166.0" r="1.5" fill="#dedede"/>
<path d="M51.6 162.5 h3.2 l0.8 1 h5.6 v6.2 h-9.6z" fill="#8b8b8b"/>
<path d="M51.6 164.7 h9.6" stroke="#a5a5a5" stroke-width="0.7"/>
<path d="M30.0 183.7 v-6 l-6 6z" fill="#777" stroke="#333" stroke-width="0.7" stroke-linejoin="round"/>
<rect x="36.3" y="175.5" width="1" height="11" fill="#e8b5c9"/>
<path d="M40.1 180.7 q4.4 -4.6 8.8 0 q-4.4 4.6 -8.8 0z" fill="#b9b9b9" stroke="#8e8e8e" stroke-width="0.7"/>
<circle cx="44.5" cy="180.7" r="1.5" fill="#767676"/>
<path d="M55.3 184.2 v-6.6 l3.2 -1.6 h3.8 v8.2z" fill="#f2f2f2"/><path d="M58.5 184.2 v-8.2" stroke="#cfcfcf" stroke-width="0.6"/>
<circle cx="105.8" cy="180.4" r="3.6" fill="#fff" stroke="#444" stroke-width="0.9"/><circle cx="105.8" cy="180.4" r="1.6" fill="#333"/>
<path d="M34.8 191.4 l4.8 3.5 l-4.8 3.5z" fill="#fafafa" stroke="#333" stroke-width="0.9" stroke-linejoin="round"/>
<path d="M47.9 194.9 q4.4 -4.6 8.8 0 q-4.4 4.6 -8.8 0z" fill="#efefef" stroke="#e6e6e6" stroke-width="0.7"/>
<circle cx="52.3" cy="194.9" r="1.5" fill="#dedede"/>
<path d="M62.3 191.4 h3.2 l0.8 1 h5.6 v6.2 h-9.6z" fill="#8b8b8b"/>
<path d="M62.3 193.6 h9.6" stroke="#a5a5a5" stroke-width="0.7"/>
<path d="M40.6 212.2 v-6 l-6 6z" fill="#777" stroke="#333" stroke-width="0.7" stroke-linejoin="round"/>
<path d="M48.0 209.2 q4.4 -4.6 8.8 0 q-4.4 4.6 -8.8 0z" fill="#b9b9b9" stroke="#8e8e8e" stroke-width="0.7"/>
<circle cx="52.4" cy="209.2" r="1.5" fill="#767676"/>
<path d="M62.3 205.7 h3.2 l0.8 1 h5.6 v6.2 h-9.6z" fill="#8b8b8b"/>
<path d="M62.3 207.9 h9.6" stroke="#a5a5a5" stroke-width="0.7"/>
<path d="M58.4 223.4 q4.4 -4.6 8.8 0 q-4.4 4.6 -8.8 0z" fill="#b9b9b9" stroke="#8e8e8e" stroke-width="0.7"/>
<circle cx="62.8" cy="223.4" r="1.5" fill="#767676"/>
<rect x="73.2" y="218.7" width="9.4" height="9.4" rx="2.2" fill="#fdfdfd" stroke="#555" stroke-width="0.9"/>
<path d="M76.3 221.6 q1.7 -1 3.4 0 v3.6 q-1.7 1 -3.4 0z" fill="#eee" stroke="#bbb" stroke-width="0.5"/>
<path d="M40.6 241.0 v-6 l-6 6z" fill="#777" stroke="#333" stroke-width="0.7" stroke-linejoin="round"/>
<path d="M48.0 238.0 q4.4 -4.6 8.8 0 q-4.4 4.6 -8.8 0z" fill="#b9b9b9" stroke="#8e8e8e" stroke-width="0.7"/>
<circle cx="52.4" cy="238.0" r="1.5" fill="#767676"/>
<path d="M62.3 234.5 h3.2 l0.8 1 h5.6 v6.2 h-9.6z" fill="#8b8b8b"/>
<path d="M62.3 236.7 h9.6" stroke="#a5a5a5" stroke-width="0.7"/>
<path d="M58.4 252.4 q4.4 -4.6 8.8 0 q-4.4 4.6 -8.8 0z" fill="#efefef" stroke="#e6e6e6" stroke-width="0.7"/>
<circle cx="62.8" cy="252.4" r="1.5" fill="#dedede"/>
<path d="M73.4 248.4 h8.6 M74.8 247.4 v9.6 M73.4 255.8 h4" stroke="#444" stroke-width="0.9" fill="none"/>
<rect x="78.2" y="253" width="4.6" height="4" rx="0.8" fill="#e0566b"/><path d="M79.3 253 v-1 a1.2 1.2 0 0 1 2.4 0 v1" fill="none" stroke="#e0566b" stroke-width="0.8"/>
<path d="M58.4 266.7 q4.4 -4.6 8.8 0 q-4.4 4.6 -8.8 0z" fill="#b9b9b9" stroke="#8e8e8e" stroke-width="0.7"/>
<circle cx="62.8" cy="266.7" r="1.5" fill="#767676"/>
<rect x="74" y="262.6" width="7.6" height="7.6" fill="#fdfdfd" stroke="#555" stroke-width="0.8" stroke-dasharray="1.6 0.9"/>
<circle cx="74" cy="262.6" r="0.9" fill="#5b9bd5"/><circle cx="81.6" cy="262.6" r="0.9" fill="#5b9bd5"/><circle cx="74" cy="270.2" r="0.9" fill="#5b9bd5"/>
<path d="M79.5 271 l3 -3.4 l1 0.9 l-3 3.4 l-1.4 0.4z" fill="#e8c23a"/>
<path d="M3 2.6 h5.4 v1.9 h-3.2 v1.4 h2.6 v1.8 h-2.6 v2.3 h-2.2z" fill="#ee8a2a"/><path d="M3 2.6 h2.2 v7.4 h-2.2z" fill="#d96a16"/>
<path d="M695.8 6.3 h5.6" stroke="#222" stroke-width="0.9"/>
<rect x="722.6" y="4.6" width="4.4" height="4.2" fill="none" stroke="#222" stroke-width="0.9"/><path d="M724 4.6 v-1.2 h4.4 v4.2 h-1.4" fill="none" stroke="#222" stroke-width="0.9"/>
<path d="M750.5 3.4 l5.8 5.8 M756.3 3.4 l-5.8 5.8" stroke="#222" stroke-width="0.9"/>
<rect x="5.4" y="18.4" width="2.2" height="2.5" fill="#575757"/>
<rect x="5.4" y="21.7" width="2.2" height="2.5" fill="#575757"/>
<rect x="5.4" y="25.0" width="2.2" height="2.5" fill="#575757"/>
<rect x="8.3" y="18.4" width="2.2" height="2.5" fill="#575757"/>
<rect x="8.3" y="21.7" width="2.2" height="2.5" fill="#575757"/>
<rect x="8.3" y="25.0" width="2.2" height="2.5" fill="#575757"/>
<rect x="11.2" y="18.4" width="2.2" height="2.5" fill="#575757"/>
<rect x="11.2" y="21.7" width="2.2" height="2.5" fill="#575757"/>
<rect x="11.2" y="25.0" width="2.2" height="2.5" fill="#575757"/>
<path d="M25.2 18.4 h4.6 l3 3 v6.2 h-7.6z" fill="#575757"/><path d="M29.8 18.4 v3 h3" fill="none" stroke="#c9c9c9" stroke-width="0.6"/>
<path d="M37.0 21.7 h3.4 l-1.7 2.2z" fill="#575757"/>
<path d="M52.2 18.6 h7.2 l1.3 1.3 v7.8 h-8.5z" fill="#575757"/><rect x="54" y="19.6" width="4.6" height="2.5" fill="#c9c9c9"/><rect x="54.2" y="24.4" width="4.6" height="3.2" fill="#c9c9c9"/><rect x="55" y="25" width="1.6" height="2.6" fill="#575757"/>
<path d="M72.2 22.6 l3.6 -2.6 v1.7 q4.2 0.2 4.4 5 q-1.4 -2.6 -4.4 -2.4 v1.7z" fill="#575757"/>
<path d="M85.3 21.7 h3.4 l-1.7 2.2z" fill="#575757"/>
<path d="M105 22.6 l-3.6 -2.6 v1.7 q-4.2 0.2 -4.4 5 q1.4 -2.6 4.4 -2.4 v1.7z" fill="#9c9c9c"/>
<path d="M110.3 21.7 h3.4 l-1.7 2.2z" fill="#a8a8a8"/>
<rect x="118" y="13.6" width="553" height="1.6" fill="#d6d6d6"/>
<path d="M369.8 22 l4.4 -2 l4.4 2 v5 l-4.4 2.2 l-4.4 -2.2z" fill="#5c5c5c"/><path d="M369.8 22 l4.4 2 v5.2 l-4.4 -2.2z" fill="#8e8e8e"/><path d="M369.8 22 l4.4 -2 l4.4 2 l-4.4 2z" fill="#6e6e6e"/>
<path d="M661 22.4 l4.6 4.6 M665.6 22.4 l-4.6 4.6" stroke="#8a8a8a" stroke-width="0.9"/>
<rect x="671" y="14" width="18.5" height="19" fill="#bcbcbc"/>
<path d="M677 24.2 h8.4 M681.2 20 v8.4" stroke="#666" stroke-width="1.1"/>
<circle cx="701.3" cy="23" r="4.3" fill="#6a6a6a"/><circle cx="701.3" cy="23" r="3" fill="#bdbdbd"/><path d="M701.3 20.8 v2.4 h2" stroke="#444" stroke-width="0.9" fill="none"/>
<circle cx="730.8" cy="23" r="4.7" fill="#5e5e5e"/>
<text x="730.8" y="25.4" font-family="Liberation Sans, sans-serif" font-weight="bold" font-size="7" fill="#e8e8e8" text-anchor="middle">?</text>
<circle cx="754.3" cy="23" r="7" fill="#f2f2f2"/>
<text x="754.3" y="25.2" font-family="Liberation Sans, sans-serif" font-size="6" fill="#666" text-anchor="middle">RK</text>
<path d="M51.3 56.5 h3.4 l-1.7 2.2z" fill="#444"/>
<path d="M166.2 75.2 h3.4 l-1.7 2.2z" fill="#444"/>
<path d="M288.7 75.2 h3.4 l-1.7 2.2z" fill="#444"/>
<path d="M458.9 75.2 h3.4 l-1.7 2.2z" fill="#444"/>
<path d="M594.0 75.2 h3.4 l-1.7 2.2z" fill="#444"/>
<path d="M637.8 75.2 h3.4 l-1.7 2.2z" fill="#444"/>
<path d="M681.0 75.2 h3.4 l-1.7 2.2z" fill="#444"/>
<path d="M747.3 75.2 h3.4 l-1.7 2.2z" fill="#444"/>
<path d="M82.9 63 h11.8" stroke="#5a5f66" stroke-width="0.9" stroke-dasharray="1.2 1.2" fill="none"/>
<path d="M94.75 63 a6.8 4.6 0 0 0 0 -9.2" stroke="#5a5f66" stroke-width="1" fill="none"/>
<circle cx="82.9" cy="63.0" r="1" fill="#5a5f66"/>
<circle cx="94.8" cy="63.0" r="1" fill="#5a5f66"/>
<circle cx="94.8" cy="53.8" r="1" fill="#5a5f66"/>
<rect x="108.3" y="52.2" width="18" height="12" fill="#f7f7f7" stroke="#6a6a6a" stroke-width="0.9"/>
<circle cx="142.9" cy="58.2" r="8.8" fill="#f7f7f7" stroke="#666" stroke-width="0.9"/>
<path d="M138.2 62.6 L147.8 53.4" stroke="#4aa3c8" stroke-width="1"/><path d="M137.6 63.2 l0.6 -2.6 l2 2z M148.4 52.8 l-0.6 2.6 l-2 -2z" fill="#4a8ab0"/>
<path d="M160.4 67.1 C160.6 60 162 55.5 164.1 55.3 C167 55 170 62.5 174.1 62.1 C177 61.5 178 55 178.3 49.6" stroke="#5a5f66" stroke-width="1" fill="none"/>
<circle cx="164.1" cy="55.3" r="1" fill="#555"/>
<circle cx="174.1" cy="62.1" r="1" fill="#555"/>
<circle cx="178.3" cy="49.8" r="1" fill="#555"/>
<path d="M194.5 50.9 L185.8 67.1 H194.5z" fill="#fafafa" stroke="#666" stroke-width="0.9" stroke-linejoin="round"/>
<path d="M194.5 50.9 L203.5 67.1 H194.5z" fill="#c6e6ee" stroke="#666" stroke-width="0.9" stroke-linejoin="round"/>
<path d="M194.5 51 V67.1" stroke="#4f6f88" stroke-width="1.3"/>
<path d="M211.4 50.9 V66.6 M230.6 50.4 V67.2" stroke="#8a9aa4" stroke-width="0.9"/>
<path d="M212 55.5 H230" stroke="#6aa6bf" stroke-width="0.8"/><path d="M212 55.5 l2.2 -1.1 v2.2z M230 55.5 l-2.2 -1.1 v2.2z" fill="#5a8aa6"/>
<path d="M243.5 67.1 V59.5 C243.8 53 247.5 49.8 253.5 49.6 L262.2 49.3" stroke="#777" stroke-width="1" fill="none"/>
<path d="M269 49.9 H287.2" stroke="#999" stroke-width="0.6"/>
<path d="M274.6 53 L276.4 52.6 L283.6 62.2 L282 62.6z M281.2 50.6 L282.9 50.9 L281 63.5 L279.4 63.2z" fill="#111"/>
<circle cx="280.3" cy="65.3" r="2" fill="none" stroke="#111" stroke-width="1.3"/><circle cx="284.6" cy="63.5" r="2" fill="none" stroke="#111" stroke-width="1.3"/>
<path d="M313.5 53 H301.6 A5.8 5.8 0 0 0 301.6 64.6 H313.5" stroke="#3b8fc2" stroke-width="1.1" fill="#d9eef7"/>
<path d="M313.5 55.9 H303.4 A3.1 3.1 0 0 0 303.4 62.1 H313.5" stroke="#555" stroke-width="1" fill="#f4f4f4"/>
<path d="M338.75 50.9 V60.9" stroke="#555" stroke-width="0.9"/>
<path d="M338.3 53.4 l-3.6 -2" stroke="#d14a55" stroke-width="0.8"/>
<path d="M338.3 55.8 l-3.6 -2" stroke="#d14a55" stroke-width="0.8"/>
<path d="M338.3 58.2 l-3.6 -2" stroke="#d14a55" stroke-width="0.8"/>
<path d="M338.3 60.6 l-3.6 -2" stroke="#d14a55" stroke-width="0.8"/>
<path d="M331.9 62.75 H342.5" stroke="#444" stroke-width="1"/>
<path d="M335.0 64 l-2 3" stroke="#d14a55" stroke-width="0.8"/>
<path d="M337.4 64 l-2 3" stroke="#d14a55" stroke-width="0.8"/>
<path d="M339.8 64 l-2 3" stroke="#d14a55" stroke-width="0.8"/>
<path d="M342.2 64 l-2 3" stroke="#d14a55" stroke-width="0.8"/>
<path d="M354 49 V67.1" stroke="#cf6a72" stroke-width="0.9"/><path d="M354 67.1 H371.9" stroke="#555" stroke-width="1"/><circle cx="354" cy="67.1" r="0.9" fill="#a33"/>
<circle cx="386.25" cy="60.9" r="6.9" fill="none" stroke="#c0545e" stroke-width="0.9"/><path d="M386.5 50.2 L396.9 59.6" stroke="#b8898c" stroke-width="0.9"/>
<rect x="408.5" y="54.8" width="11.5" height="2.2" fill="#c9394a"/><rect x="408.5" y="60.4" width="11.5" height="2.2" fill="#555"/>
<path d="M433.1 62.75 L443.75 52.5" stroke="#cf5a66" stroke-width="0.9"/><path d="M436.9 64.6 L447.5 54.6" stroke="#8a8a8a" stroke-width="0.9"/>
<path d="M459.4 54.6 L470.6 65.9" stroke="#cf6a74" stroke-width="0.9"/><path d="M459.4 54.6 L465 59.8" stroke="#999" stroke-width="0.9"/><path d="M473.1 51.75 L465 59.6" stroke="#8a8a8a" stroke-width="0.9"/>
<path d="M487 57.4 V54.6 A4.6 4.6 0 0 1 496.2 54.6 V57.4" fill="none" stroke="#dc6068" stroke-width="1.7"/>
<rect x="484.1" y="57.1" width="15" height="10.7" rx="0.8" fill="#e27d82"/><rect x="491.2" y="60.3" width="0.9" height="2.6" fill="#9c2f3a"/>
<path d="M517.9 53 L510 66.5 H526z" fill="none" stroke="#c0566a" stroke-width="0.9" stroke-linejoin="round"/>
<circle cx="543.5" cy="58.4" r="8.4" fill="none" stroke="#bb6270" stroke-width="0.9"/><circle cx="543.5" cy="58.4" r="5" fill="none" stroke="#bb6270" stroke-width="0.9"/>
<path d="M574.5 56.5 H591.6 M574.6 54.2 V58.6 M591.5 54.2 V58.6" stroke="#666" stroke-width="0.9"/>
<rect x="574.5" y="58.8" width="17.1" height="4.4" fill="#e4a928"/>
<path d="M577 58.8 v2 M579.5 58.8 v1.4 M582 58.8 v2 M584.5 58.8 v1.4 M587 58.8 v2 M589.5 58.8 v1.4" stroke="#9a6d10" stroke-width="0.5"/>
<rect x="619.1" y="50.3" width="17" height="16.2" fill="#4ea4e6"/>
<path d="M619.1 66.5 V61 L624.5 56.2 L629 60.6 L631.8 58.2 L636.1 62.4 V66.5z" fill="#2f7fc6"/>
<circle cx="631.4" cy="54.4" r="1.7" fill="#e9f4fc"/>
<rect x="659.3" y="47.3" width="22.7" height="22.3" fill="#1a8dd4"/>
<path d="M660.5 50 H676 M678.5 48.5 V57 M660.5 59.5 H673" stroke="#46a6e2" stroke-width="0.6" stroke-dasharray="1.5 1"/>
<path d="M674.8 56.8 V66.6 L677 64.6 L678.5 68 L679.9 67.4 L678.4 64.1 L681.2 63.8z" fill="#fff"/>
<circle cx="725.5" cy="58.6" r="9.2" fill="#5db82e"/>
<path d="M720.6 58.6 L724 62 L730.6 55.2" stroke="#fff" stroke-width="2.2" fill="none" stroke-linecap="round" stroke-linejoin="round"/>
<path d="M617.6 161.5 v5" stroke="#555" stroke-width="0.8"/>
<circle cx="625.5" cy="164" r="2.4" fill="#2a2a2a"/><rect x="624.1" y="163.6" width="2.8" height="0.8" fill="#ddd"/>
<path d="M756.2 162 l2.6 2 l-2.6 2z M759.2 162 l2.6 2 l-2.6 2z" fill="#333"/>
<path d="M618.8 178.2 h4.4 l-2.2 2.8z" fill="#333"/>
<path d="M722.8 194.4 L716 198 L722.8 201.2" fill="none" stroke="#7a7a7a" stroke-width="1"/><path d="M722.8 194.4 L716 198" stroke="#e0a94a" stroke-width="0.9" stroke-dasharray="1.5 1"/>
<path d="M714.6 214.4 h9.4 v6.6 h-9.4z" fill="#8c8c8c"/><path d="M714.6 214.4 l2 -2.2 h5.4 l2 2.2z" fill="#777"/><rect x="716" y="216.4" width="6.6" height="2.4" fill="#e8e8e8"/><path d="M717.6 216.4 v2.4 M719.3 216.4 v2.4 M721 216.4 v2.4" stroke="#888" stroke-width="0.5"/>
<rect x="715.4" y="230.3" width="8" height="8" rx="1.4" fill="#d0d0d0" stroke="#8a8a8a" stroke-width="0.9"/>
<path d="M717.2 234.5 l1.8 2 l3.4 -4.6" fill="none" stroke="#222" stroke-width="1.2"/>
<rect x="715.4" y="248.3" width="8" height="8" rx="1.4" fill="#d0d0d0" stroke="#8a8a8a" stroke-width="0.9"/>
<path d="M717.2 252.5 l1.8 2 l3.4 -4.6" fill="none" stroke="#222" stroke-width="1.2"/>
<rect x="715.4" y="266.3" width="8" height="8" rx="1.4" fill="#e9e9e9" stroke="#8a8a8a" stroke-width="0.9"/>
<rect x="715.4" y="284.3" width="8" height="8" rx="1.4" fill="#d0d0d0" stroke="#8a8a8a" stroke-width="0.9"/>
<path d="M717.2 288.5 l1.8 2 l3.4 -4.6" fill="none" stroke="#222" stroke-width="1.2"/>
<rect x="715.4" y="302.3" width="8" height="8" rx="1.4" fill="#d0d0d0" stroke="#8a8a8a" stroke-width="0.9"/>
<path d="M717.2 306.5 l1.8 2 l3.4 -4.6" fill="none" stroke="#222" stroke-width="1.2"/>
<rect x="715.4" y="320.3" width="8" height="8" rx="1.4" fill="#d0d0d0" stroke="#8a8a8a" stroke-width="0.9"/>
<path d="M717.2 324.5 l1.8 2 l3.4 -4.6" fill="none" stroke="#222" stroke-width="1.2"/>
<rect x="715.4" y="338.3" width="8" height="8" rx="1.4" fill="#d0d0d0" stroke="#8a8a8a" stroke-width="0.9"/>
<path d="M717.2 342.5 l1.8 2 l3.4 -4.6" fill="none" stroke="#222" stroke-width="1.2"/>
<rect x="715.4" y="356.3" width="8" height="8" rx="1.4" fill="#d0d0d0" stroke="#8a8a8a" stroke-width="0.9"/>
<path d="M717.2 360.5 l1.8 2 l3.4 -4.6" fill="none" stroke="#222" stroke-width="1.2"/>
<rect x="715.4" y="374.3" width="8" height="8" rx="1.4" fill="#e9e9e9" stroke="#8a8a8a" stroke-width="0.9"/>
<rect x="304" y="542.5" width="151" height="15.5" rx="1.5" fill="#fdfdfd" opacity="0.85"/>
<ellipse cx="314.6" cy="551.0" rx="4.8" ry="2.2" fill="none" stroke="#7a7a7a" stroke-width="0.9"/><ellipse cx="314.6" cy="551.0" rx="2" ry="4.6" fill="none" stroke="#7a7a7a" stroke-width="0.9"/>
<path d="M322.5 550.0 h3 l-1.5 2z" fill="#444"/>
<path d="M330 548.6 h8.6 v6.2 h-8.6z" fill="#9a9a9a"/><path d="M330 548.6 l1.8 -2 h5 l1.8 2z" fill="#7a7a7a"/><rect x="331.4" y="550.2" width="5.8" height="3" fill="#e2e2e2"/>
<path d="M346.6 551.4 l1 -3.6 l1.2 0.2 l0.3 -1.4 l1.3 0 l0.2 1.2 l1.2 -0.4 l0.4 1.4 l1.1 0.3 l-0.2 4.4 l-1.4 2.6 h-3.4z" fill="#f4f4f4" stroke="#666" stroke-width="0.9" stroke-linejoin="round"/>
<circle cx="364" cy="550" r="3" fill="#f6f6f6" stroke="#666" stroke-width="0.9"/><path d="M366.2 552.2 l2.6 2.8" stroke="#555" stroke-width="1.4"/><path d="M368.6 547 v3 M367.1 548.5 h3" stroke="#666" stroke-width="0.7"/>
<circle cx="380" cy="550" r="3.6" fill="#f6f6f6" stroke="#666" stroke-width="0.9"/><path d="M382.6 552.8 l2.8 3" stroke="#333" stroke-width="1.5"/><path d="M376.2 546 h8 v8" fill="none" stroke="#999" stroke-width="0.5" stroke-dasharray="1 1"/>
<path d="M389.1 550.0 h3 l-1.5 2z" fill="#444"/>
<rect x="400.6" y="546.4" width="10.6" height="7" rx="0.8" fill="#7d9fd0" stroke="#6a6a6a" stroke-width="0.9"/><rect x="404.4" y="553.6" width="3" height="1.6" fill="#777"/><rect x="402.6" y="555" width="6.6" height="1" fill="#777"/>
<path d="M412.1 550.0 h3 l-1.5 2z" fill="#444"/>
<rect x="419.4" y="546.2" width="10" height="9.6" fill="#6c6c6c"/><path d="M422 546.2 v9.6 M424.5 546.2 v9.6 M427 546.2 v9.6 M419.4 548.6 h10 M419.4 551 h10 M419.4 553.4 h10" stroke="#a8a8a8" stroke-width="0.5"/>
<path d="M430.3 550.0 h3 l-1.5 2z" fill="#444"/>
<rect x="437.6" y="546.6" width="10.4" height="8.8" rx="0.6" fill="#6f8fcc" stroke="#5a6a86" stroke-width="0.8"/><path d="M437.6 551 h10.4 M442.8 546.6 v8.8" stroke="#dfe6f4" stroke-width="0.8"/>
<path d="M448.9 550.0 h3 l-1.5 2z" fill="#444"/>
<circle cx="172" cy="549.9" r="2.3" fill="#2a2a2a"/><path d="M171 549.9 h2 M172 548.9 v2" stroke="#ddd" stroke-width="0.6"/>
<path d="M179.3 546.5 v7" stroke="#555" stroke-width="0.8"/>
<path d="M7 572.1 v6.4" stroke="#3c3c3c" stroke-width="1.2"/><path d="M13.4 572.1 v6.4 l-5.2 -3.2z" fill="#3c3c3c"/>
<path d="M27 572.3 v6 l-5 -3z" fill="#3c3c3c"/><path d="M28.6 573.7 v3.2" stroke="#3c3c3c" stroke-width="1"/>
<path d="M36.2 571.3 v8 l6.6 -4z" fill="#3c3c3c"/>
<path d="M53.4 572.3 v6 l5 -3z" fill="#3c3c3c"/><path d="M51.8 573.7 v3.2" stroke="#3c3c3c" stroke-width="1"/>
<path d="M73.4 572.1 v6.4" stroke="#3c3c3c" stroke-width="1.2"/><path d="M67 572.1 v6.4 l5.2 -3.2z" fill="#3c3c3c"/>
<rect x="86" y="565" width="12.5" height="3.4" fill="#d98ad8"/><rect x="101" y="565" width="39" height="3.4" fill="#f09a94"/>
<path d="M92.5 580 v3.8 H136.2 v-3.8 M106.5 580 v3.8 M121 580 v3.8" fill="none" stroke="#cdd6e2" stroke-width="0.8"/>
<path d="M87.6 572.6 l2 -2.2 h7 v7 l-2 2.2 h-7z" fill="#d4d4d4" stroke="#7a7a7a" stroke-width="0.8" stroke-linejoin="round"/><path d="M87.6 572.6 h7 v7 M94.6 572.6 l2 -2.2" fill="none" stroke="#7a7a7a" stroke-width="0.7"/>
<path d="M102.6 570.6 h7.4 v7.4 h-7.4z" fill="#f8f8f8" stroke="#666" stroke-width="0.8" stroke-dasharray="2 0.8"/>
<path d="M107.2 579.4 l3.4 -4.2 l1.1 0.9 l-3.4 4.2 l-1.5 0.5z" fill="#e6b83a"/>
<path d="M102.6 570.6 v8.6" stroke="#4f6fae" stroke-width="1"/>
<path d="M116.8 571.8 q0 -1.6 1.6 -1.6 h5 q1.6 0 1.6 1.6 v6 q0 1.6 -1.6 1.6 h-5 q-1.6 0 -1.6 -1.6z" fill="#4f9fe6"/><path d="M121.8 570.4 v9" stroke="#2f7fc6" stroke-width="1"/><rect x="122.3" y="570.4" width="2.6" height="9" rx="1" fill="#3b8ad6"/>
<path d="M131.6 570.6 h7.4 v7.4 h-7.4z" fill="#f8f8f8" stroke="#666" stroke-width="0.8" stroke-dasharray="2 0.8"/>
<path d="M136.2 579.4 l3.4 -4.2 l1.1 0.9 l-3.4 4.2 l-1.5 0.5z" fill="#e6b83a"/>
<path d="M131.6 570.6 v8.6" stroke="#4f6fae" stroke-width="1"/>
<path d="M139.4 566.6 h6.9 l-2.6 3.4 v15.4 h-1.6 v-15.4z" fill="#484848"/>
<polygon points="759.20 575.00 757.86 576.19 757.97 577.97 756.19 577.86 755.00 579.20 753.81 577.86 752.03 577.97 752.14 576.19 750.80 575.00 752.14 573.81 752.03 572.03 753.81 572.14 755.00 570.80 756.19 572.14 757.97 572.03 757.86 573.81" fill="#8a8a8a"/><circle cx="755" cy="575" r="1.5" fill="#f0f0f0"/>
<ellipse cx="732" cy="141" rx="17" ry="7" fill="#e9e9e9" opacity="0.7"/>
<path d="M708.4 104.6 L709.3 130" stroke="#7a7ae0" stroke-width="1.1"/>
<path d="M731 144.5 L734 147" stroke="#e88aa0" stroke-width="1"/>
<text x="706.7" y="101.8" font-family="Liberation Sans, sans-serif" font-weight="bold" font-size="7.5" fill="#6e6edc" text-anchor="middle">Z</text>
<text x="735.9" y="152.2" font-family="Liberation Sans, sans-serif" font-weight="bold" font-size="7" fill="#ea8aa2" text-anchor="middle">X</text>
<path d="M709.3 107.8 L728.6 98.8 L751.1 109.1 L730.5 119.4z" fill="#ececec" stroke="#f6f6f6" stroke-width="1" stroke-linejoin="round"/>
<path d="M709.3 107.8 L730.5 119.4 L730.9 144.5 L710.6 133.5z" fill="#dfdfdf" stroke="#f2f2f2" stroke-width="1" stroke-linejoin="round"/>
<path d="M730.5 119.4 L751.1 109.1 L749.8 131.6 L730.9 144.5z" fill="#d3d3d3" stroke="#f0f0f0" stroke-width="1" stroke-linejoin="round"/>
<text transform="matrix(0.86 0.47 0.02 1 712.2 124.6)" font-family="Liberation Sans, sans-serif" font-size="5.2" fill="#858585" letter-spacing="0.1">FRONT</text>
<text transform="matrix(0.83 -0.5 -0.04 1 734.2 131.2)" font-family="Liberation Sans, sans-serif" font-size="5.2" fill="#858585" letter-spacing="0.1">RIGHT</text>
<text transform="matrix(0.8 0.42 -0.85 0.4 728.2 105.2)" font-family="Liberation Sans, sans-serif" font-size="5" fill="#8a8a8a">TOP</text>
</svg>

</div>
</body>
</html>
